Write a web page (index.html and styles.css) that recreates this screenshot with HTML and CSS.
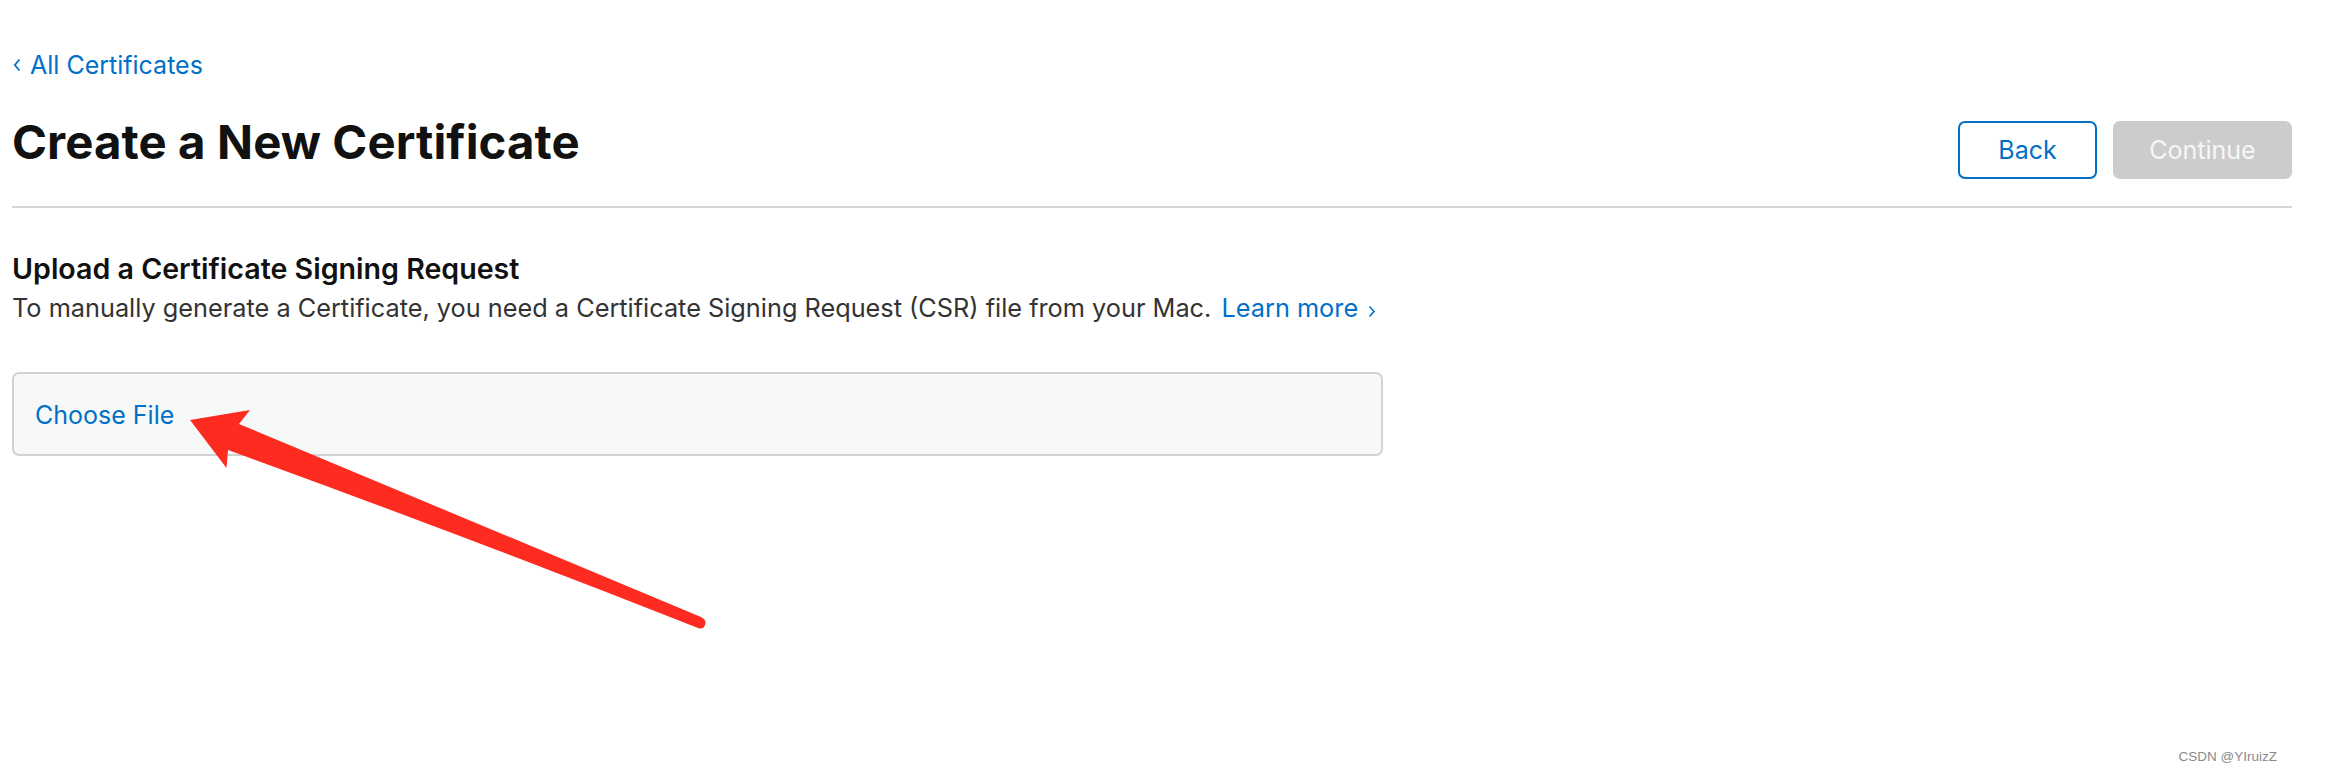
FILE: index.html
```html
<!DOCTYPE html>
<html lang="en">
<head>
<meta charset="utf-8">
<title>Create a New Certificate</title>
<link rel="stylesheet" href="styles.css">
</head>
<body>
<div class="page">
  <a class="back-link" href="#"><svg class="chev" width="8" height="14" viewBox="0 0 8 14"><path d="M6.5 1.5 L1.8 7 L6.5 12.5" fill="none" stroke="currentColor" stroke-width="1.8"/></svg><span>All Certificates</span></a>
  <div class="header">
    <h1 class="title">Create a New Certificate</h1>
    <div class="actions">
      <button class="btn btn-outline">Back</button>
      <button class="btn btn-disabled">Continue</button>
    </div>
  </div>
  <section class="upload">
    <h2 class="subtitle">Upload a Certificate Signing Request</h2>
    <p class="desc">To manually generate a Certificate, you need a Certificate Signing Request (CSR) file from your Mac. <a class="more" href="#">Learn more<svg class="chev-r" width="8" height="13" viewBox="0 0 8 13"><path d="M1.5 1.5 L6 6.5 L1.5 11.5" fill="none" stroke="currentColor" stroke-width="1.6"/></svg></a></p>
    <div class="file-box"><span class="choose">Choose File</span></div>
  </section>
</div>
<svg class="arrow" width="2334" height="772" viewBox="0 0 2334 772">
  <path d="M190 420 L250 410 L239 424 L701 617 Q707 620 705 625 Q703 630 698 628 Q470 538 228 450 L226.5 468 Z" fill="#fe2b20"/>
</svg>
<div class="watermark">CSDN @YIruizZ</div>
</body>
</html>
```

FILE: styles.css
```css
html, body {
  margin: 0;
  padding: 0;
  background: #ffffff;
}

body {
  width: 2334px;
  height: 772px;
  position: relative;
  overflow: hidden;
  font-family: Inter, "Liberation Sans", sans-serif;
  color: #111111;
}

.page {
  padding: 49px 42px 0 12px;
}

.back-link {
  display: flex;
  align-items: center;
  height: 32px;
  font-size: 25px;
  line-height: 32px;
  color: #0070c9;
  text-decoration: none;
}

.chev {
  margin-left: 1px;
  margin-right: 9px;
}

.header {
  margin-top: 29px;
  display: flex;
  justify-content: space-between;
  align-items: flex-start;
  padding-bottom: 27px;
  border-bottom: 2px solid #d6d6d6;
}

.title {
  margin: 0;
  padding-top: 3px;
  font-size: 47.3px;
  line-height: 58px;
  font-weight: 700;
  color: #111111;
  letter-spacing: 0.1px;
}

.actions {
  margin-top: 11px;
  display: flex;
  gap: 16px;
}

.btn {
  height: 58px;
  border-radius: 7px;
  font-family: Inter, "Liberation Sans", sans-serif;
  font-size: 25px;
  padding: 0;
  cursor: pointer;
}

.btn-outline {
  width: 139px;
  background: #ffffff;
  border: 2px solid #0070c9;
  color: #0070c9;
}

.btn-disabled {
  width: 179px;
  background: #cccccc;
  border: none;
  color: #f7f7f7;
}

.upload {
  padding-top: 44px;
}

.subtitle {
  margin: 0;
  font-size: 28.6px;
  line-height: 34px;
  font-weight: 600;
  color: #111111;
}

.desc {
  margin: 5px 0 0;
  font-size: 25.3px;
  line-height: 34px;
  color: #333333;
}

.more {
  margin-left: 3px;
  color: #0070c9;
  text-decoration: none;
}

.chev-r {
  margin-left: 10px;
  vertical-align: -1px;
}

.file-box {
  margin-top: 47px;
  width: 1371px;
  height: 84px;
  box-sizing: border-box;
  border: 2px solid #d2d2d2;
  border-radius: 7px;
  background: #f7f9f9;
  display: flex;
  align-items: center;
  padding-left: 21px;
}

.choose {
  font-size: 25px;
  padding-top: 2px;
  color: #0070c9;
}

.arrow {
  position: absolute;
  left: 0;
  top: 0;
  pointer-events: none;
}

.watermark {
  position: absolute;
  right: 57px;
  bottom: 8px;
  font-family: "Liberation Sans", Arial, sans-serif;
  font-size: 13.5px;
  color: #8a8a8a;
}
```
